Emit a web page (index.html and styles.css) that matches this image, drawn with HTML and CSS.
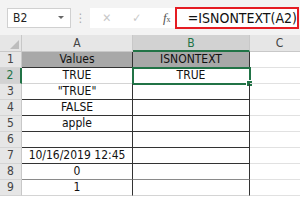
FILE: index.html
```html
<!DOCTYPE html>
<html lang="en">
<head>
<meta charset="UTF-8" />
<title>ISNONTEXT</title>
<link rel="stylesheet" href="styles.css">
</head>
<body>

<div class="formula-bar">
    <div class="name-box">
        <span>B2</span>
        <span class="caret"></span>
    </div>
    <div class="grip">&#8942;</div>
    <div class="fx-buttons">
        <span class="btn">&#10005;</span>
        <span class="btn">&#10003;</span>
        <span class="btn fx"><i>f</i><small>x</small></span>
    </div>
    <div class="formula-input">=ISNONTEXT(A2)</div>
</div>

<div class="sheet">
    <div class="corner"><span class="tri"></span></div>
    <div class="col-head">A</div>
    <div class="col-head active">B</div>
    <div class="col-head">C</div>

    <div class="row-head">1</div>
    <div class="cell title">Values</div>
    <div class="cell title b">ISNONTEXT</div>
    <div class="cell c"></div>

    <div class="row-head active">2</div>
    <div class="cell light">TRUE</div>
    <div class="cell b selected">TRUE<span class="handle"></span></div>
    <div class="cell c"></div>

    <div class="row-head">3</div>
    <div class="cell">"TRUE"</div>
    <div class="cell b"></div>
    <div class="cell c"></div>

    <div class="row-head">4</div>
    <div class="cell">FALSE</div>
    <div class="cell b"></div>
    <div class="cell c"></div>

    <div class="row-head">5</div>
    <div class="cell">apple</div>
    <div class="cell b"></div>
    <div class="cell c"></div>

    <div class="row-head">6</div>
    <div class="cell"></div>
    <div class="cell b"></div>
    <div class="cell c"></div>

    <div class="row-head">7</div>
    <div class="cell">10/16/2019 12:45</div>
    <div class="cell b"></div>
    <div class="cell c"></div>

    <div class="row-head">8</div>
    <div class="cell mid">0</div>
    <div class="cell b mid"></div>
    <div class="cell c"></div>

    <div class="row-head">9</div>
    <div class="cell light">1</div>
    <div class="cell b light"></div>
    <div class="cell c"></div>
</div>

</body>
</html>
```

FILE: styles.css
```css
body {
    margin: 0;
    font-family: "Liberation Sans Narrow", "DejaVu Sans Condensed", Roboto, sans-serif;
    background: #fff;
    color: #222;
    overflow: hidden;
}

/* formula bar */
.formula-bar {
    height: 35px;
    background: #f3f3f3;
    display: flex;
    align-items: center;
    padding-left: 7px;
    box-sizing: border-box;
}

.name-box {
    width: 82px;
    height: 20px;
    background: #fff;
    border: 1px solid #d0d0d0;
    box-sizing: border-box;
    display: flex;
    align-items: center;
    justify-content: space-between;
    padding: 0 6px 0 5px;
    font-size: 12px;
}

.caret {
    width: 0;
    height: 0;
    border-left: 3px solid transparent;
    border-right: 3px solid transparent;
    border-top: 3px solid #666;
}

.grip {
    width: 25px;
    text-align: center;
    color: #aaa;
    font-size: 12px;
}

.fx-buttons {
    width: 89px;
    height: 20px;
    background: #fff;
    display: flex;
    align-items: center;
    padding-left: 9px;
    gap: 14px;
    box-sizing: border-box;
}

.btn {
    width: 16px;
    text-align: center;
    color: #c8c8c8;
    font-size: 12px;
}

.btn.fx {
    color: #555;
    font-family: "Liberation Serif", serif;
    font-size: 13px;
}

.btn.fx small {
    font-size: 8px;
}

.formula-input {
    flex: 1;
    height: 22px;
    border: 2px solid #e51c23;
    background: #fff;
    box-sizing: border-box;
    display: flex;
    align-items: center;
    padding-left: 11px;
    font-size: 14px;
    color: #111;
    margin-right: 1px;
}

/* grid */
.sheet {
    display: grid;
    grid-template-columns: 22px 111px 117px 60px;
    grid-template-rows: 17px repeat(9, 16px);
    font-size: 12px;
}

.corner {
    background: #e6e6e6;
    border-right: 1px solid #c8c8c8;
    border-bottom: 1px solid #c8c8c8;
    position: relative;
}

.tri {
    position: absolute;
    right: 2px;
    bottom: 2px;
    width: 0;
    height: 0;
    border-left: 9px solid transparent;
    border-bottom: 9px solid #bdbdbd;
}

.col-head {
    background: #e6e6e6;
    border-right: 1px solid #c8c8c8;
    border-bottom: 1px solid #c8c8c8;
    text-align: center;
    line-height: 16px;
    color: #444;
}

.col-head.active {
    background: #d2d2d2;
    color: #217346;
    border-bottom: 2px solid #217346;
}

.row-head {
    background: #e6e6e6;
    border-right: 1px solid #c8c8c8;
    border-bottom: 1px solid #d4d4d4;
    text-align: center;
    line-height: 15px;
    color: #444;
}

.row-head.active {
    background: #d2d2d2;
    color: #217346;
    border-right: 2px solid #217346;
}

.cell {
    border-bottom: 1px solid #333;
    border-right: 1px solid #333;
    text-align: center;
    line-height: 15px;
    color: #111;
    position: relative;
}

.cell.title {
    background: #a8a8a8;
}

.cell.light {
    border-bottom-color: #d4d4d4;
}

.cell.mid {
    border-bottom-color: #8a8a8a;
}

.cell.c {
    border-right: 1px solid #e1e1e1;
    border-bottom: 1px solid #e1e1e1;
}

.cell.selected {
    outline: 2px solid #217346;
    outline-offset: -1px;
}

.handle {
    position: absolute;
    right: -4px;
    bottom: -4px;
    width: 5px;
    height: 5px;
    background: #217346;
    border: 1px solid #fff;
}
```
